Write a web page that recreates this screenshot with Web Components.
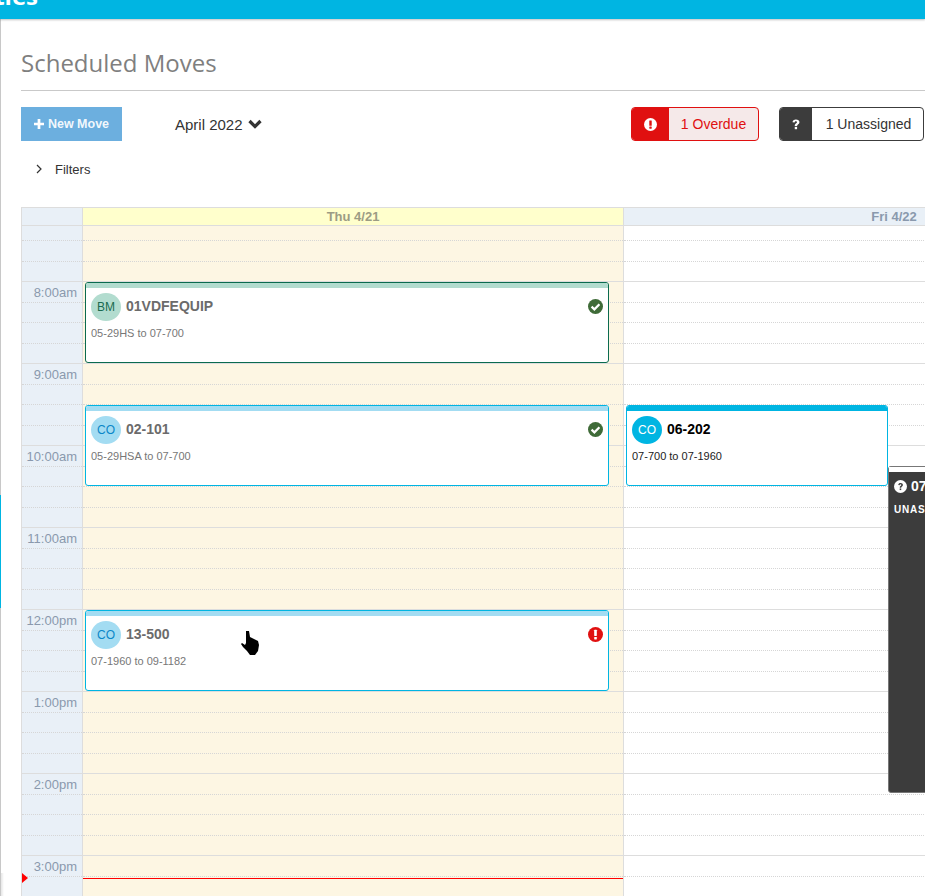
<!DOCTYPE html>
<html>
<head>
<meta charset="utf-8">
<title>Scheduled Moves</title>
<style>
    html, body {
        margin: 0;
        height: 896px;
        overflow: hidden;
        background: #fff;
        font-family: "Liberation Sans", Arial, sans-serif;
    }
</style>
</head>
<body>
<app-bar label="Utilities"></app-bar>
<page-shell>
    <page-title>Scheduled Moves</page-title>
    <move-toolbar>
        <status-pill slot="right" kind="overdue" count="1 Overdue"></status-pill>
        <status-pill slot="right" kind="unassigned" count="1 Unassigned"></status-pill>
    </move-toolbar>
    <filter-toggle>Filters</filter-toggle>
    <move-calendar>
        <cal-column slot="columns" heading="Thu 4/21" today>
            <move-card top="56" height="81" right="14" state="past" tone="green" initials="BM" name="01VDFEQUIP" route="05-29HS to 07-700" status="ok"></move-card>
            <move-card top="179" height="81" right="14" state="past" tone="blue" initials="CO" name="02-101" route="05-29HSA to 07-700" status="ok"></move-card>
            <move-card top="384" height="81" right="14" state="past" tone="blue" initials="CO" name="13-500" route="07-1960 to 09-1182" status="late"></move-card>
            <now-line top="652"></now-line>
        </cal-column>
        <cal-column slot="columns" heading="Fri 4/22">
            <move-card top="179" height="81" width="262" state="active" tone="blue" initials="CO" name="06-202" route="07-700 to 07-1960"></move-card>
            <dark-card top="240" left="264" height="327" name="07" note="UNASSIGNED"></dark-card>
        </cal-column>
    </move-calendar>
</page-shell>
<hand-cursor></hand-cursor>

<script>
    // Small helper so each element can set its shadow content in one call
    class Base extends HTMLElement {
        render(html) {
            if (!this.shadowRoot) this.attachShadow({mode: 'open'});
            this.shadowRoot.innerHTML = html;
        }
        attr(name, fallback) {
            return this.hasAttribute(name) ? this.getAttribute(name) : fallback;
        }
    }

    const ICONS = {
        ok: '<svg viewBox="0 0 16 16" width="15" height="15"><circle cx="8" cy="8" r="8" fill="currentColor"/><path d="M3.8 8.2 L6.8 11 L12.2 5.6" fill="none" stroke="#fff" stroke-width="2.4"/></svg>',
        late: '<svg viewBox="0 0 16 16" width="15" height="15"><circle cx="8" cy="8" r="8" fill="currentColor"/><rect x="6.6" y="3" width="2.8" height="6.6" rx=".5" fill="#fff"/><rect x="6.6" y="10.6" width="2.8" height="2.6" rx=".5" fill="#fff"/></svg>',
        question: '<svg viewBox="0 0 16 16" width="13" height="13"><circle cx="8" cy="8" r="8" fill="#fff"/><path d="M5.2 6.2 C5.3 4.4 6.5 3.6 8.1 3.6 C9.8 3.6 11 4.6 11 6 C11 7.8 8.9 7.8 8.9 9.4 L7 9.4 C7 7 9 7.2 9 6.1 C9 5.5 8.6 5.2 8 5.2 C7.4 5.2 7 5.6 6.9 6.4 Z" fill="#3c3c3c"/><rect x="7" y="10.4" width="1.9" height="2" fill="#3c3c3c"/></svg>'
    };

    class AppBar extends Base {
        connectedCallback() {
            this.render(`<style>
                :host { display: block; height: 19px; background: #00b5e2; overflow: hidden; box-shadow: 0 1px 2px rgba(0,0,0,.25); position: relative; z-index: 2; }
                div { display: flex; justify-content: flex-end; width: 38px; margin-top: -16px; }
                span { flex: none; font: bold 24px/24px "Open Sans", sans-serif; color: #fff; white-space: nowrap; }
            </style><div><span>${this.attr('label', '')}</span></div>`);
        }
    }

    class PageShell extends Base {
        connectedCallback() {
            this.render(`<style>
                :host {
                    display: block;
                    height: 877px;
                    box-sizing: border-box;
                    padding: 0 0 0 21px;
                    overflow: hidden;
                    background:
                        linear-gradient(#c8c8c8, #c8c8c8) 0 0 / 1px 476px no-repeat,
                        linear-gradient(#00b5e2, #00b5e2) 0 476px / 1px 113px no-repeat,
                        linear-gradient(#c8c8c8, #c8c8c8) 0 589px / 1px 288px no-repeat,
                        linear-gradient(to right, #ddd, transparent) 0 854px / 4px 23px no-repeat,
                        #fff;
                }
            </style><slot></slot>`);
        }
    }

    class PageTitle extends Base {
        connectedCallback() {
            this.render(`<style>
                :host { display: block; height: 72px; box-sizing: border-box; padding-top: 27px; border-bottom: 1px solid #c9c9c9; }
                h1 { margin: 0; font: 400 24px/33px "Open Sans", sans-serif; color: #7f7f7f; }
            </style><h1><slot></slot></h1>`);
        }
    }

    class MoveToolbar extends Base {
        connectedCallback() {
            this.render(`<style>
                :host { display: flex; align-items: center; height: 34px; margin-top: 16px; width: 903px; }
                button { width: 101px; height: 34px; padding: 0; border: 0; background: #6cafdf; color: rgba(255,255,255,.92); font: bold 12.5px "Liberation Sans", sans-serif; display: flex; align-items: center; justify-content: center; gap: 4px; }
                button svg { display: block; }
                .month { display: flex; align-items: center; gap: 5px; margin-left: 53px; font-size: 15px; color: #333; }
                .right { display: flex; gap: 20px; margin-left: auto; }
            </style>
            <button><svg viewBox="0 0 11 11" width="10" height="10"><path d="M4 0h3v4h4v3H7v4H4V7H0V4h4z" fill="#fff"/></svg>New Move</button>
            <div class="month">April 2022 <svg viewBox="0 0 14 10" width="14" height="10"><path d="M1.5 2 L7 7.5 L12.5 2" fill="none" stroke="#333" stroke-width="3.2"/></svg></div>
            <div class="right"><slot name="right"></slot></div>`);
        }
    }

    class StatusPill extends Base {
        connectedCallback() {
            const overdue = this.attr('kind') === 'overdue';
            const glyph = overdue
                ? '<svg viewBox="0 0 16 16" width="13" height="13"><circle cx="8" cy="8" r="8" fill="#fff"/><rect x="6.5" y="3" width="3" height="6.6" rx=".5" fill="#e01010"/><rect x="6.5" y="10.6" width="3" height="2.6" rx=".5" fill="#e01010"/></svg>'
                : '<svg viewBox="0 0 10 14" width="8" height="11"><path d="M0.6 4.2 C0.7 1.6 2.4 .6 4.9 .6 C7.6 .6 9.4 1.9 9.4 4 C9.4 6.6 6.4 6.6 6.4 8.9 L3.4 8.9 C3.4 5.6 6.2 5.8 6.2 4.2 C6.2 3.4 5.6 3 4.8 3 C3.9 3 3.4 3.6 3.3 4.6 Z" fill="#fff"/><rect x="3.4" y="10" width="3" height="3" fill="#fff"/></svg>';
            this.render(`<style>
                :host { display: flex; height: 34px; box-sizing: border-box; border: 1px solid; border-radius: 4px; overflow: hidden; font-size: 14px; }
                :host([kind=overdue]) { border-color: #e01010; width: 128px; color: #e01010; background: #f5e9e9; }
                :host([kind=unassigned]) { border-color: #3c3c3c; width: 145px; color: #333; background: #fff; }
                .icon { display: flex; align-items: center; justify-content: center; flex: none; }
                :host([kind=overdue]) .icon { width: 37px; background: #e01010; }
                :host([kind=unassigned]) .icon { width: 32px; background: #3c3c3c; }
                :host([kind=unassigned]) .text { padding-left: 2px; }
                .text { flex: auto; display: flex; align-items: center; justify-content: center; }
            </style><div class="icon">${glyph}</div><div class="text">${this.attr('count', '')}</div>`);
        }
    }

    class FilterToggle extends Base {
        connectedCallback() {
            this.render(`<style>
                :host { display: flex; align-items: center; height: 20px; margin-top: 18px; padding-left: 15px; font-size: 13px; color: #333; }
                svg { margin-right: 13px; display: block; }
            </style><svg viewBox="0 0 6 10" width="6" height="10"><path d="M1 1 L5 5 L1 9" fill="none" stroke="#333" stroke-width="1.2"/></svg><slot></slot>`);
        }
    }

    class MoveCalendar extends Base {
        connectedCallback() {
            // axis rows are the same as a day's rows, so share the builder
            const labels = ['8:00am', '9:00am', '10:00am', '11:00am', '12:00pm', '1:00pm', '2:00pm', '3:00pm'];
            let rows = '';
            for (const h of CalColumn.slots()) {
                const label = h.hour ? labels[h.hour - 1] : '';
                rows += `<div class="${h.cls}" style="height:${h.height}px">${label}</div>`;
            }
            this.render(`<style>
                :host { display: flex; margin-top: 28px; width: 1200px; border-top: 1px solid #ddd; }
                .axis { flex: none; width: 62px; box-sizing: border-box; background: #e9f0f7; border-left: 1px solid #ddd; border-right: 1px solid #ddd; color: #8a99ad; font-size: 13px; text-align: right; }
                .head { height: 17px; border-bottom: 1px solid #ddd; }
                .axis div:not(.head) { box-sizing: border-box; padding: 3px 5px 0 0; border-bottom: 1px dotted #d6d6d6; line-height: 15px; }
                .axis div.hour-end { border-bottom: 1px solid #ddd; }
            </style>
            <div class="axis"><div class="head"></div>${rows}</div>
            <slot name="columns"></slot>`);
        }
    }

    class CalColumn extends Base {
        // row heights include the bottom line; an hour is 82px
        static slots() {
            const out = [
                {height: 15, cls: ''},
                {height: 21, cls: ''},
                {height: 20, cls: 'hour-end'}
            ];
            for (let hour = 1; hour <= 8; hour++) {
                out.push({height: 21, cls: '', hour: hour});
                out.push({height: 20, cls: ''});
                out.push({height: 21, cls: ''});
                out.push({height: 20, cls: 'hour-end'});
            }
            return out;
        }
        connectedCallback() {
            const rows = CalColumn.slots().map(s => `<div class="${s.cls}" style="height:${s.height}px"></div>`).join('');
            this.render(`<style>
                :host { display: block; flex: none; width: 541px; box-sizing: border-box; border-right: 1px solid #ddd; --head-bg: #e9f0f7; --head-color: #8a99ad; }
                :host([today]) { background: #fdf6e3; --head-bg: #ffffcc; --head-color: #9c9c84; }
                .head { height: 17px; line-height: 17px; text-align: center; font-size: 13px; font-weight: bold; background: var(--head-bg); color: var(--head-color); border-bottom: 1px solid #ddd; }
                .body { position: relative; }
                .rows div { box-sizing: border-box; border-bottom: 1px dotted #d6d6d6; }
                .rows div.hour-end { border-bottom: 1px solid #ddd; }
            </style>
            <div class="head">${this.attr('heading', '')}</div>
            <div class="body"><div class="rows">${rows}</div><slot></slot></div>`);
        }
    }

    class MoveCard extends Base {
        connectedCallback() {
            const tones = {
                green: {edge: '#0b6b4e', soft: '#b2dccf', text: '#1a6b50'},
                blue: {edge: '#00b5e2', soft: '#a3dcf2', text: '#0a87c8'}
            };
            const tone = tones[this.attr('tone', 'blue')];
            const active = this.attr('state') === 'active';
            const right = this.attr('right');
            const status = this.attr('status');
            const box = right ? `left:2px;right:${right}px` : `left:2px;width:${this.attr('width')}px`;
            const statusColor = status === 'late' ? '#e01010' : '#3f6b38';
            this.render(`<style>
                :host { position: absolute; top: ${this.attr('top')}px; height: ${this.attr('height')}px; ${box}; box-sizing: border-box; background: #fff; border: 1px solid ${tone.edge}; border-radius: 3px; overflow: hidden; }
                .band { height: 5px; background: ${active ? tone.edge : tone.soft}; }
                .top { display: flex; align-items: center; padding: 5px 5px 0 5px; }
                .avatar { width: 30px; height: 28px; border-radius: 50%; display: flex; align-items: center; justify-content: center; font-size: 12px; background: ${active ? tone.edge : tone.soft}; color: ${active ? '#fff' : tone.text}; }
                .name { margin: -2px 0 0 5px; font-size: 14px; font-weight: bold; color: ${active ? '#000' : '#6b6b6b'}; flex: auto; }
                .status { color: ${statusColor}; display: flex; margin-top: -2px; }
                .route { margin: 6px 0 0 5px; font-size: 11px; line-height: 13px; color: ${active ? '#222' : '#777'}; }
            </style>
            <div class="band"></div>
            <div class="top"><div class="avatar">${this.attr('initials', '')}</div><div class="name">${this.attr('name', '')}</div>${status ? `<div class="status">${ICONS[status === 'late' ? 'late' : 'ok']}</div>` : ''}</div>
            <div class="route">${this.attr('route', '')}</div>`);
        }
    }

    class DarkCard extends Base {
        connectedCallback() {
            this.render(`<style>
                :host { position: absolute; top: ${this.attr('top')}px; left: ${this.attr('left')}px; width: 300px; height: ${this.attr('height')}px; box-sizing: border-box; border: 1px solid #777; border-radius: 3px 0 0 3px; background: #3c3c3c; color: #fff; }
                .band { height: 5px; background: #fff; }
                .top { display: flex; align-items: center; gap: 4px; padding: 6px 0 0 5px; font-size: 14px; font-weight: bold; }
                svg { display: block; }
                .note { margin: 9px 0 0 5px; font: bold 10px/13px "Liberation Sans", sans-serif; letter-spacing: .8px; }
            </style>
            <div class="band"></div>
            <div class="top">${ICONS.question}<span>${this.attr('name', '')}</span></div>
            <div class="note">${this.attr('note', '')}</div>`);
        }
    }

    class NowLine extends Base {
        connectedCallback() {
            this.render(`<style>
                :host { position: absolute; top: ${this.attr('top')}px; left: 0; right: 0; height: 1px; background: #f00; }
                i { position: absolute; left: -61px; top: -5px; border-left: 6px solid #f00; border-top: 5px solid transparent; border-bottom: 5px solid transparent; }
            </style><i></i>`);
        }
    }

    class HandCursor extends Base {
        connectedCallback() {
            this.render(`<style>
                :host { position: fixed; left: 241px; top: 631px; width: 18px; height: 24px; z-index: 5; }
                svg { display: block; }
            </style>
            <svg viewBox="0 0 18 24" width="18" height="24"><path d="M5 0 L8 0 L9 6 L13 8 L17 10 L18 14 L17 20 L14 24 L9 24 L6 20 L2 16 L0 13 L1 12 L4 14 L5 12 Z" fill="#000"/></svg>`);
        }
    }

    customElements.define('app-bar', AppBar);
    customElements.define('page-shell', PageShell);
    customElements.define('page-title', PageTitle);
    customElements.define('move-toolbar', MoveToolbar);
    customElements.define('status-pill', StatusPill);
    customElements.define('filter-toggle', FilterToggle);
    customElements.define('move-calendar', MoveCalendar);
    customElements.define('cal-column', CalColumn);
    customElements.define('move-card', MoveCard);
    customElements.define('dark-card', DarkCard);
    customElements.define('now-line', NowLine);
    customElements.define('hand-cursor', HandCursor);
</script>
</body>
</html>
